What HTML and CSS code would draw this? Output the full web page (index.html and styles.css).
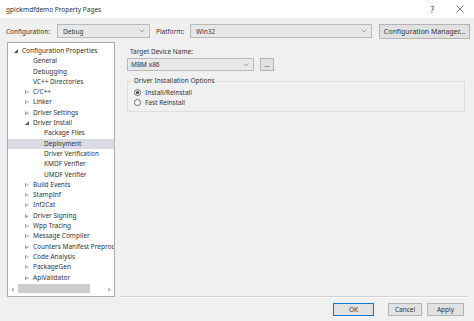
FILE: index.html
```html
<!DOCTYPE html>
<html lang="en">
<head>
    <meta charset="UTF-8">
    <meta name="viewport" content="width=device-width, initial-scale=1.0">
    <title>gpiokmdfdemo Property Pages</title>
    <link rel="stylesheet" href="styles.css">
</head>
<body>
    <div class="ventana">
        <div class="barra-titulo">
            <span class="titulo">gpiokmdfdemo Property Pages</span>
            <span class="ayuda">?</span>
            <span class="cerrar">
                <svg width="8" height="8" viewBox="0 0 8 8"><path d="M0.5 0.5 L7.5 7.5 M7.5 0.5 L0.5 7.5" stroke="#444" stroke-width="0.7" fill="none"/></svg>
            </span>
        </div>

        <div class="fila-config">
            <span class="etiqueta">Configuration:</span>
            <div class="combo combo-config"><span>Debug</span><svg class="flecha" width="6" height="4" viewBox="0 0 6 4"><path d="M0.5 0.5 L3 3 L5.5 0.5" stroke="#888" stroke-width="0.7" fill="none"/></svg></div>
            <span class="etiqueta etiqueta-plataforma">Platform:</span>
            <div class="combo combo-plataforma"><span>Win32</span><svg class="flecha" width="6" height="4" viewBox="0 0 6 4"><path d="M0.5 0.5 L3 3 L5.5 0.5" stroke="#888" stroke-width="0.7" fill="none"/></svg></div>
            <button class="boton boton-manager">Configuration Manager...</button>
        </div>

        <div class="principal">
            <div class="arbol">
                <ul class="lista">
                    <li class="nivel0"><i class="abierto"></i>Configuration Properties</li>
                    <li class="nivel1">General</li>
                    <li class="nivel1">Debugging</li>
                    <li class="nivel1">VC++ Directories</li>
                    <li class="nivel1"><i class="cerrado"></i>C/C++</li>
                    <li class="nivel1"><i class="cerrado"></i>Linker</li>
                    <li class="nivel1"><i class="cerrado"></i>Driver Settings</li>
                    <li class="nivel1"><i class="abierto"></i>Driver Install</li>
                    <li class="nivel2">Package Files</li>
                    <li class="nivel2 seleccionado">Deployment</li>
                    <li class="nivel2">Driver Verification</li>
                    <li class="nivel2">KMDF Verifier</li>
                    <li class="nivel2">UMDF Verifier</li>
                    <li class="nivel1"><i class="cerrado"></i>Build Events</li>
                    <li class="nivel1"><i class="cerrado"></i>StampInf</li>
                    <li class="nivel1"><i class="cerrado"></i>Inf2Cat</li>
                    <li class="nivel1"><i class="cerrado"></i>Driver Signing</li>
                    <li class="nivel1"><i class="cerrado"></i>Wpp Tracing</li>
                    <li class="nivel1"><i class="cerrado"></i>Message Compiler</li>
                    <li class="nivel1"><i class="cerrado"></i>Counters Manifest Preproc</li>
                    <li class="nivel1"><i class="cerrado"></i>Code Analysis</li>
                    <li class="nivel1"><i class="cerrado"></i>PackageGen</li>
                    <li class="nivel1"><i class="cerrado"></i>ApiValidator</li>
                </ul>
                <div class="scroll">
                    <span class="scroll-flecha">&lsaquo;</span>
                    <div class="scroll-pista"><div class="scroll-barra"></div></div>
                    <span class="scroll-flecha">&rsaquo;</span>
                </div>
            </div>

            <div class="panel">
                <div class="panel-etiqueta">Target Device Name:</div>
                <div class="fila-dispositivo">
                    <div class="combo combo-dispositivo"><span>MBM x86</span><svg class="flecha" width="6" height="4" viewBox="0 0 6 4"><path d="M0.5 0.5 L3 3 L5.5 0.5" stroke="#888" stroke-width="0.7" fill="none"/></svg></div>
                    <button class="boton boton-puntos">...</button>
                </div>
                <div class="grupo">
                    <span class="grupo-titulo">Driver Installation Options</span>
                    <label class="radio"><span class="circulo marcado"></span>Install/Reinstall</label>
                    <label class="radio"><span class="circulo"></span>Fast Reinstall</label>
                </div>
            </div>
        </div>

        <div class="pie">
            <button class="boton boton-pie boton-ok">OK</button>
            <button class="boton boton-pie boton-cancelar">Cancel</button>
            <button class="boton boton-pie boton-aplicar">Apply</button>
        </div>
    </div>
</body>
</html>
```

FILE: styles.css
```css
/* Ventana de propiedades */
body {
    margin: 0;
    background: #f0f0f0;
    font-family: "Noto Sans", "Open Sans", sans-serif;
    font-size: 6.5px;
    color: #333;
}
.ventana {
    width: 474px;
    height: 321px;
    display: flex;
    flex-direction: column;
    overflow: hidden;
}
.barra-titulo {
    height: 18px;
    background: #fff;
    display: flex;
    align-items: center;
    padding-left: 6px;
    padding-right: 10px;
}
.titulo {
    flex: 1;
}
.ayuda {
    font-size: 8px;
    margin-right: 22px;
}
.cerrar {
    display: flex;
}

/* Fila de configuracion */
.fila-config {
    display: flex;
    align-items: center;
    height: 16px;
    margin-top: 5px;
    padding-left: 6px;
}
.etiqueta {
    width: 51px;
}
.etiqueta-plataforma {
    width: 34px;
    margin-left: 6px;
}
.combo {
    height: 14px;
    box-sizing: border-box;
    border: 1px solid #b9b9b9;
    background: #e8e8e8;
    display: flex;
    align-items: center;
    justify-content: space-between;
    padding: 0 4px 0 5px;
}
.combo-config {
    width: 93px;
}
.combo-plataforma {
    width: 182px;
}
.combo-dispositivo {
    width: 127px;
    height: 13px;
    padding-left: 3px;
}
.boton {
    font-family: inherit;
    font-size: 6.5px;
    color: #333;
    background: #e1e1e1;
    border: 1px solid #b4b4b4;
    padding: 0;
    box-sizing: border-box;
}
.boton-manager {
    width: 91px;
    height: 15px;
    margin-left: 7px;
    font-size: 7px;
}

/* Area principal */
.principal {
    display: flex;
    margin-top: 3px;
    padding-left: 7px;
    height: 255px;
}
.arbol {
    width: 108px;
    box-sizing: border-box;
    border: 1px solid #acacac;
    background: #fff;
    display: flex;
    flex-direction: column;
}
.lista {
    list-style: none;
    margin: 0;
    padding: 3px 0 0 0;
    flex: 1;
    overflow: hidden;
}
.lista li {
    height: 10.3px;
    line-height: 10.3px;
    white-space: nowrap;
}
.nivel0 {
    padding-left: 14px;
}
.nivel1 {
    padding-left: 25px;
}
.nivel2 {
    padding-left: 36px;
}
.seleccionado {
    background: #dadae5;
}
.lista i {
    display: inline-block;
    margin-left: -8px;
    margin-right: 4px;
    vertical-align: 0;
}
.abierto {
    width: 4px;
    height: 4px;
    background: #555;
    clip-path: polygon(100% 0, 100% 100%, 0 100%);
}
.cerrado {
    width: 0;
    height: 0;
    border-left: 4px solid #999;
    border-top: 2.5px solid transparent;
    border-bottom: 2.5px solid transparent;
    position: relative;
}
.cerrado::after {
    content: "";
    position: absolute;
    left: -3.3px;
    top: -1.3px;
    border-left: 2px solid #fff;
    border-top: 1.3px solid transparent;
    border-bottom: 1.3px solid transparent;
}
.scroll {
    height: 11px;
    display: flex;
    align-items: center;
    margin-bottom: 2px;
}
.scroll-flecha {
    width: 10px;
    text-align: center;
    font-size: 8px;
    color: #555;
}
.scroll-pista {
    flex: 1;
    height: 9px;
}
.scroll-barra {
    width: 72px;
    height: 100%;
    background: #cdcdcd;
}

/* Panel derecho */
.panel {
    flex: 1;
    margin-left: 5px;
    margin-right: 7px;
    border-bottom: 1px solid #d2d2d2;
    box-shadow: 0 1px 0 #fff;
    padding: 5px 0 0 7px;
}
.panel-etiqueta {
    padding-left: 3px;
    height: 10px;
    line-height: 10px;
}
.fila-dispositivo {
    display: flex;
    align-items: center;
    margin-top: 1px;
}
.boton-puntos {
    width: 14px;
    height: 13px;
    margin-left: 6px;
    line-height: 8px;
}
.grupo {
    position: relative;
    margin-top: 10px;
    margin-right: 2px;
    border: 1px solid #dedede;
    height: 31px;
    padding-top: 5px;
    box-sizing: border-box;
    display: flex;
    flex-direction: column;
}
.grupo-titulo {
    position: absolute;
    top: -6px;
    left: 5px;
    background: #f0f0f0;
    padding: 0 1px;
}
.radio {
    display: flex;
    align-items: center;
    height: 10.5px;
    padding-left: 6px;
}
.circulo {
    width: 7px;
    height: 7px;
    box-sizing: border-box;
    border: 1px solid #666;
    border-radius: 50%;
    background: #fff;
    margin-right: 4px;
    position: relative;
}
.marcado::after {
    content: "";
    position: absolute;
    left: 1px;
    top: 1px;
    width: 3px;
    height: 3px;
    border-radius: 50%;
    background: #333;
}

/* Botones inferiores */
.pie {
    display: flex;
    justify-content: flex-end;
    padding-right: 10px;
    margin-top: 6px;
}
.boton-pie {
    height: 13px;
}
.boton-ok {
    width: 41px;
    border-color: #0078d7;
}
.boton-cancelar {
    width: 34px;
    margin-left: 14px;
}
.boton-aplicar {
    width: 37px;
    margin-left: 5px;
}
```
